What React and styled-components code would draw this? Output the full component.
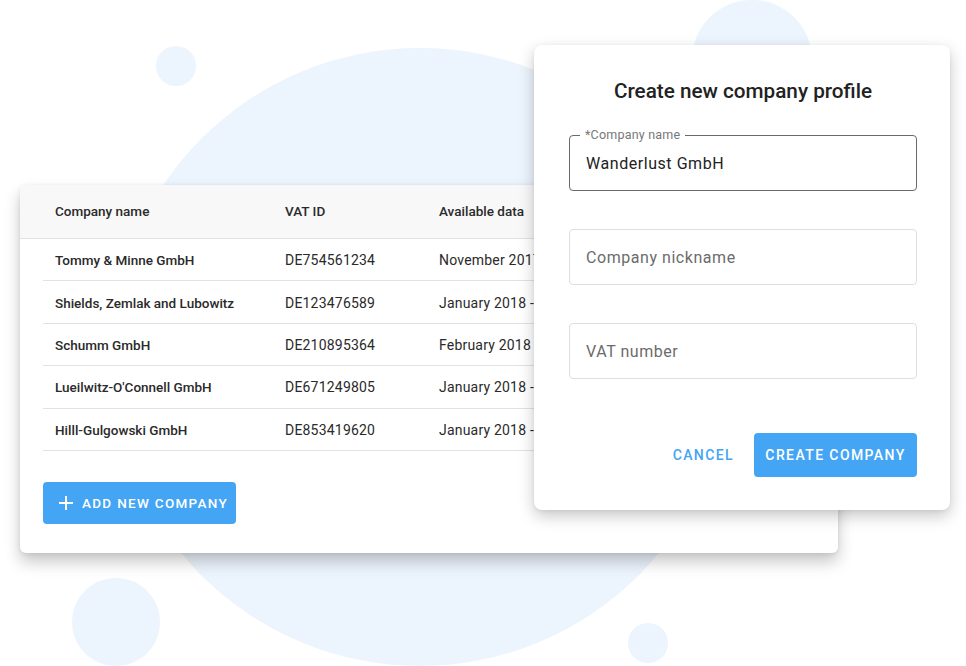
import React from "react";
import styled, { createGlobalStyle } from "styled-components";

const GlobalStyle = createGlobalStyle`
  * { box-sizing: border-box; }
  html, body { margin: 0; padding: 0; background: #fff; }
  body { font-family: Roboto, "Noto Sans", "Liberation Sans", sans-serif; }
`;

const companies = [
  { name: "Tommy & Minne GmbH", vat: "DE754561234", data: "November 2017 - March 2019" },
  { name: "Shields, Zemlak and Lubowitz", vat: "DE123476589", data: "January 2018 - March 2019" },
  { name: "Schumm GmbH", vat: "DE210895364", data: "February 2018 - March 2019" },
  { name: "Lueilwitz-O'Connell GmbH", vat: "DE671249805", data: "January 2018 - March 2019" },
  { name: "Hilll-Gulgowski GmbH", vat: "DE853419620", data: "January 2018 - March 2019" },
];

const bubbles = [
  { x: 420, y: 357, r: 309 },
  { x: 176, y: 66, r: 20 },
  { x: 752, y: 60, r: 60 },
  { x: 116, y: 622, r: 44 },
  { x: 648, y: 643, r: 20 },
];

const PlusIcon = () => (
  <svg width="14" height="14" viewBox="0 0 14 14">
    <path d="M7 0v14M0 7h14" stroke="#fff" strokeWidth="2" />
  </svg>
);

const App = () => {
  return (
    <>
      <GlobalStyle />
      <Stage>
        {bubbles.map((b, i) => (
          <Bubble
            key={i}
            style={{ left: b.x - b.r, top: b.y - b.r, width: b.r * 2, height: b.r * 2 }}
          />
        ))}

        <TableCard>
          <HeadRow>
            <Cell $strong>Company name</Cell>
            <Cell $strong>VAT ID</Cell>
            <Cell $strong>Available data</Cell>
          </HeadRow>
          {companies.map((c) => (
            <Row key={c.vat}>
              <Cell $strong>{c.name}</Cell>
              <Cell>{c.vat}</Cell>
              <Cell>{c.data}</Cell>
            </Row>
          ))}
          <AddButton>
            <PlusIcon />
            ADD NEW COMPANY
          </AddButton>
        </TableCard>

        <Dialog>
          <DialogTitle>Create new company profile</DialogTitle>
          <Fields>
            <Field $active>
              <FieldLabel>*Company name</FieldLabel>
              <FieldValue>Wanderlust GmbH</FieldValue>
            </Field>
            <Field>
              <FieldValue $placeholder>Company nickname</FieldValue>
            </Field>
            <Field>
              <FieldValue $placeholder>VAT number</FieldValue>
            </Field>
          </Fields>
          <Actions>
            <TextButton>CANCEL</TextButton>
            <PrimaryButton>CREATE COMPANY</PrimaryButton>
          </Actions>
        </Dialog>
      </Stage>
    </>
  );
};

export default App;

const Stage = styled.div`
  position: relative;
  width: 966px;
  height: 666px;
  overflow: hidden;
  padding: 185px 0 0 20px;
`;

const Bubble = styled.div`
  position: absolute;
  border-radius: 50%;
  background-color: #ecf4fd;
`;

const TableCard = styled.div`
  position: relative;
  width: 818px;
  height: 368px;
  background-color: #fff;
  border-radius: 6px;
  box-shadow: 0 9px 16px rgba(0, 0, 0, 0.22), 0 1px 4px rgba(0, 0, 0, 0.08);
  overflow: hidden;
`;

const HeadRow = styled.div`
  display: grid;
  grid-template-columns: 230px 154px 1fr;
  align-items: center;
  height: 54px;
  padding: 0 0 1px 35px;
  background-color: #f8f8f8;
  border-bottom: 1px solid #e2e2e2;
`;

const Row = styled.div`
  display: grid;
  grid-template-columns: 230px 154px 1fr;
  align-items: center;
  height: 42.4px;
  margin: 0 23px;
  padding: 1px 0 0 12px;
  border-bottom: 1px solid #e2e2e2;
`;

const Cell = styled.div`
  font-size: ${(p) => (p.$strong ? "13.5px" : "14px")};
  font-weight: ${(p) => (p.$strong ? 500 : 400)};
  letter-spacing: ${(p) => (p.$strong ? "0" : "0.2px")};
  color: #2a2a2a;
  white-space: nowrap;
`;

const AddButton = styled.button`
  display: flex;
  align-items: center;
  gap: 9px;
  margin: 31px 0 0 23px;
  height: 42px;
  width: 193px;
  padding: 0 0 0 16px;
  border: none;
  border-radius: 4px;
  background-color: #44a5f5;
  color: #fff;
  font-family: inherit;
  font-size: 13.5px;
  font-weight: 500;
  letter-spacing: 1.3px;
`;

const Dialog = styled.div`
  position: absolute;
  left: 534px;
  top: 45px;
  width: 416px;
  height: 465px;
  padding: 33px 33px 0 35px;
  background-color: #fff;
  border-radius: 8px;
  box-shadow: 0 6px 16px rgba(0, 0, 0, 0.22), 0 1px 4px rgba(0, 0, 0, 0.06);
  display: flex;
  flex-direction: column;
`;

const DialogTitle = styled.h2`
  margin: 0;
  text-align: center;
  font-size: 20.7px;
  font-weight: 500;
  color: #222;
  line-height: 26px;
`;

const Fields = styled.div`
  display: flex;
  flex-direction: column;
  gap: 38px;
  margin-top: 31px;
`;

const Field = styled.div`
  position: relative;
  height: 56px;
  display: flex;
  align-items: center;
  padding: 0 16px;
  border-radius: 4px;
  border: ${(p) => (p.$active ? "1.5px solid #6a6a6a" : "1px solid #dedede")};
`;

const FieldLabel = styled.span`
  position: absolute;
  left: 10px;
  top: -8px;
  padding: 0 5px;
  background-color: #fff;
  font-size: 12.5px;
  letter-spacing: 0.2px;
  color: #777;
  line-height: 14px;
`;

const FieldValue = styled.span`
  font-size: 16px;
  letter-spacing: 0.55px;
  color: ${(p) => (p.$placeholder ? "#6b6b6b" : "#222")};
`;

const Actions = styled.div`
  display: flex;
  justify-content: flex-end;
  align-items: center;
  gap: 20px;
  margin-top: 54px;
`;

const TextButton = styled.button`
  border: none;
  background: none;
  padding: 0;
  color: #44a5f5;
  font-family: inherit;
  font-size: 14px;
  font-weight: 500;
  letter-spacing: 1.4px;
`;

const PrimaryButton = styled.button`
  height: 44px;
  width: 163px;
  border: none;
  border-radius: 4px;
  background-color: #44a5f5;
  color: #fff;
  font-family: inherit;
  font-size: 14px;
  font-weight: 500;
  letter-spacing: 1.4px;
`;
